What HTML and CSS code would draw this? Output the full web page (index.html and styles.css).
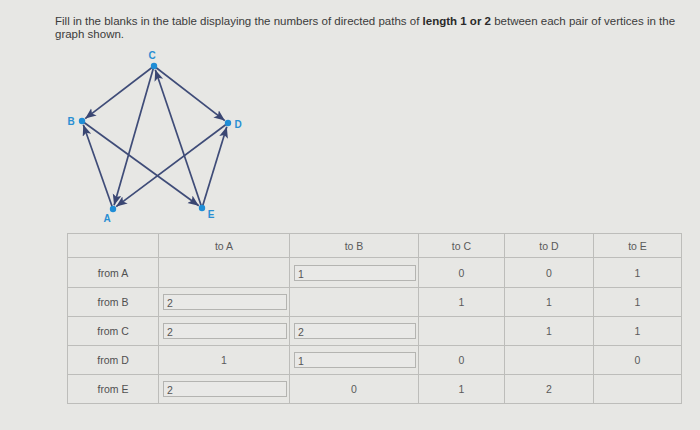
FILE: index.html
```html
<!DOCTYPE html>
<html>
<head>
<meta charset="utf-8">
<link rel="stylesheet" href="styles.css">
</head>
<body>
<div class="page">
  <p class="prompt">Fill in the blanks in the table displaying the numbers of directed paths of <b>length 1 or 2</b> between each pair of vertices in the graph shown.</p>
  <svg class="graph" width="190" height="180" viewBox="0 0 190 180">
    <defs>
      <marker id="ah" markerWidth="12" markerHeight="10" refX="11" refY="4.5" orient="auto" markerUnits="userSpaceOnUse">
        <path d="M0,0 L11,4.5 L0,9 L2.5,4.5 z" fill="#3a4672"/>
      </marker>
    </defs>
    <g stroke="#3f4c78" stroke-width="1.7" marker-end="url(#ah)">
      <line x1="94" y1="21" x2="25.2" y2="73.6"/>
      <line x1="94" y1="21" x2="164.8" y2="75.6"/>
      <line x1="94" y1="21" x2="54.1" y2="160.2"/>
      <line x1="142" y1="163" x2="95.3" y2="24.8"/>
      <line x1="168" y1="78" x2="56.2" y2="161.6"/>
      <line x1="22" y1="76" x2="138.8" y2="160.7"/>
      <line x1="53" y1="164" x2="23.3" y2="79.8"/>
      <line x1="142" y1="163" x2="166.8" y2="81.8"/>
    </g>
    <g fill="#1f8dd6">
      <circle cx="94" cy="21" r="3.2"/>
      <circle cx="22" cy="76" r="3.2"/>
      <circle cx="168" cy="78" r="3.2"/>
      <circle cx="53" cy="164" r="3.2"/>
      <circle cx="142" cy="163" r="3.2"/>
    </g>
    <g class="vlabel">
      <text x="92" y="14" text-anchor="middle">C</text>
      <text x="11" y="80" text-anchor="middle">B</text>
      <text x="178" y="83" text-anchor="middle">D</text>
      <text x="47" y="177" text-anchor="middle">A</text>
      <text x="151" y="173" text-anchor="middle">E</text>
    </g>
  </svg>
  <table class="paths">
    <colgroup>
      <col class="c0"><col class="c1"><col class="c2"><col class="c3"><col class="c4"><col class="c5">
    </colgroup>
    <tr class="head">
      <th></th><th>to A</th><th>to B</th><th>to C</th><th>to D</th><th>to E</th>
    </tr>
    <tr class="r1">
      <td class="lbl">from A</td><td></td><td class="in"><span class="box">1</span></td><td>0</td><td>0</td><td>1</td>
    </tr>
    <tr class="r2">
      <td class="lbl">from B</td><td class="in"><span class="box">2</span></td><td></td><td>1</td><td>1</td><td>1</td>
    </tr>
    <tr class="r3">
      <td class="lbl">from C</td><td class="in"><span class="box">2</span></td><td class="in"><span class="box">2</span></td><td></td><td>1</td><td>1</td>
    </tr>
    <tr class="r4">
      <td class="lbl">from D</td><td>1</td><td class="in"><span class="box">1</span></td><td>0</td><td></td><td>0</td>
    </tr>
    <tr class="r5">
      <td class="lbl">from E</td><td class="in"><span class="box">2</span></td><td>0</td><td>1</td><td>2</td><td></td>
    </tr>
  </table>
</div>
</body>
</html>
```

FILE: styles.css
```css
html, body {
  margin: 0;
  padding: 0;
  background: #e7e7e4;
}
.page {
  width: 700px;
  height: 430px;
  padding: 15px 0 0 55px;
  box-sizing: border-box;
  font-family: "Liberation Sans", Arial, sans-serif;
  color: #3a3a3a;
  overflow: hidden;
}
.prompt {
  margin: 0;
  width: 640px;
  font-size: 11.5px;
  line-height: 13px;
  color: #3b3b3b;
}
.prompt b {
  color: #2a2a2a;
}
.graph {
  display: block;
  margin: 4px 0 0 5px;
}
.vlabel text {
  font-family: "Liberation Sans", Arial, sans-serif;
  font-size: 10px;
  font-weight: bold;
  fill: #2a8fd3;
}
.paths {
  border-collapse: collapse;
  margin: 8px 0 0 12px;
  font-size: 10.5px;
  color: #5a5a5a;
  table-layout: fixed;
  width: 614px;
}
.c0 { width: 91px; }
.c1 { width: 131px; }
.c2 { width: 129px; }
.c3 { width: 86px; }
.c4 { width: 89px; }
.c5 { width: 88px; }
.paths th, .paths td {
  border: 1px solid #bdbdba;
  padding: 0;
  text-align: center;
  font-weight: normal;
  vertical-align: middle;
}
.paths th {
  height: 24px;
  vertical-align: top;
  padding-top: 6px;
  box-sizing: border-box;
}
.paths td {
  height: 28px;
}
.paths .r1 td { height: 29px; }
.paths td.in {
  text-align: left;
  padding: 0 2px 0 4px;
}
.box {
  display: block;
  height: 16px;
  line-height: 16px;
  border: 1px solid #b4b4b1;
  background: #e9e9e7;
  padding-left: 3px;
  font-size: 10.5px;
  color: #555;
  box-sizing: border-box;
}
.lbl {
  color: #505050;
}
```
